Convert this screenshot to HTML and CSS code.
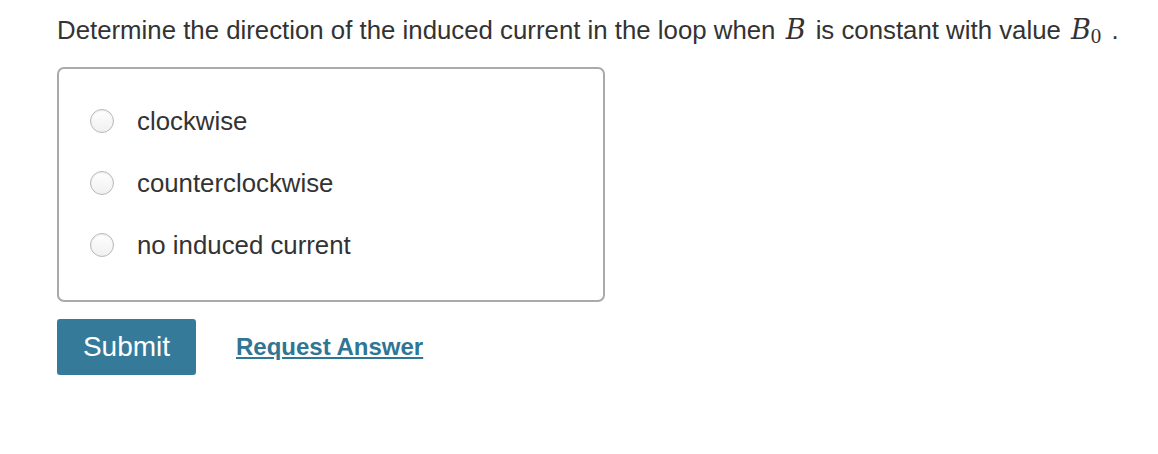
FILE: index.html
```html
<!DOCTYPE html>
<html lang="en">
<head>
  <meta charset="UTF-8" />
  <title>Induced current</title>
  <link rel="stylesheet" href="styles.css">
</head>
<body>

<div class="question">
  <p class="prompt">Determine the direction of the induced current in the loop when <span class="math">B</span> is constant with value <span class="math">B<sub>0</sub></span> .</p>

  <div class="choices">
    <label class="choice"><span class="radio"></span>clockwise</label>
    <label class="choice"><span class="radio"></span>counterclockwise</label>
    <label class="choice"><span class="radio"></span>no induced current</label>
  </div>

  <div class="actions">
    <button class="submit">Submit</button>
    <a href="#" class="request">Request Answer</a>
  </div>
</div>

</body>
</html>
```

FILE: styles.css
```css
body {
  margin: 0;
  background: #fff;
  color: #333;
  font-family: 'Liberation Sans', Arial, sans-serif;
}
.question {
  padding: 14px 0 0 57px;
}
.prompt {
  margin: 0;
  font-size: 25.8px;
  line-height: 32px;
  color: #333;
}
.math {
  font-family: 'DejaVu Serif', 'Liberation Serif', serif;
  font-style: italic;
  font-size: 27px;
  margin: 0 3px;
}
.math sub {
  font-family: 'Liberation Serif', serif;
  font-style: normal;
  font-size: 21px;
  vertical-align: -4px;
  line-height: 0;
}
.choices {
  width: 513px;
  margin-top: 21px;
  border: 2px solid #aaa;
  border-radius: 7px;
  padding: 39px 0 42px 31px;
  display: flex;
  flex-direction: column;
  gap: 36px;
}
.choice {
  display: flex;
  align-items: center;
  font-size: 25.8px;
  height: 26px;
  color: #333;
}
.radio {
  width: 22px;
  height: 22px;
  border: 1px solid #b8b8b8;
  border-radius: 50%;
  background: linear-gradient(#fff, #f0f0f0);
  box-shadow: inset 0 1px 2px rgba(0,0,0,0.08);
  margin-right: 23px;
}
.actions {
  display: flex;
  align-items: center;
  margin-top: 17px;
  gap: 40px;
}
.submit {
  width: 139px;
  height: 56px;
  border: none;
  border-radius: 3px;
  background: #367a99;
  color: #fff;
  font-family: 'Liberation Sans', Arial, sans-serif;
  font-size: 28px;
  cursor: pointer;
}
.request {
  color: #2f7594;
  font-weight: bold;
  font-size: 24px;
  text-decoration: underline;
}
```
